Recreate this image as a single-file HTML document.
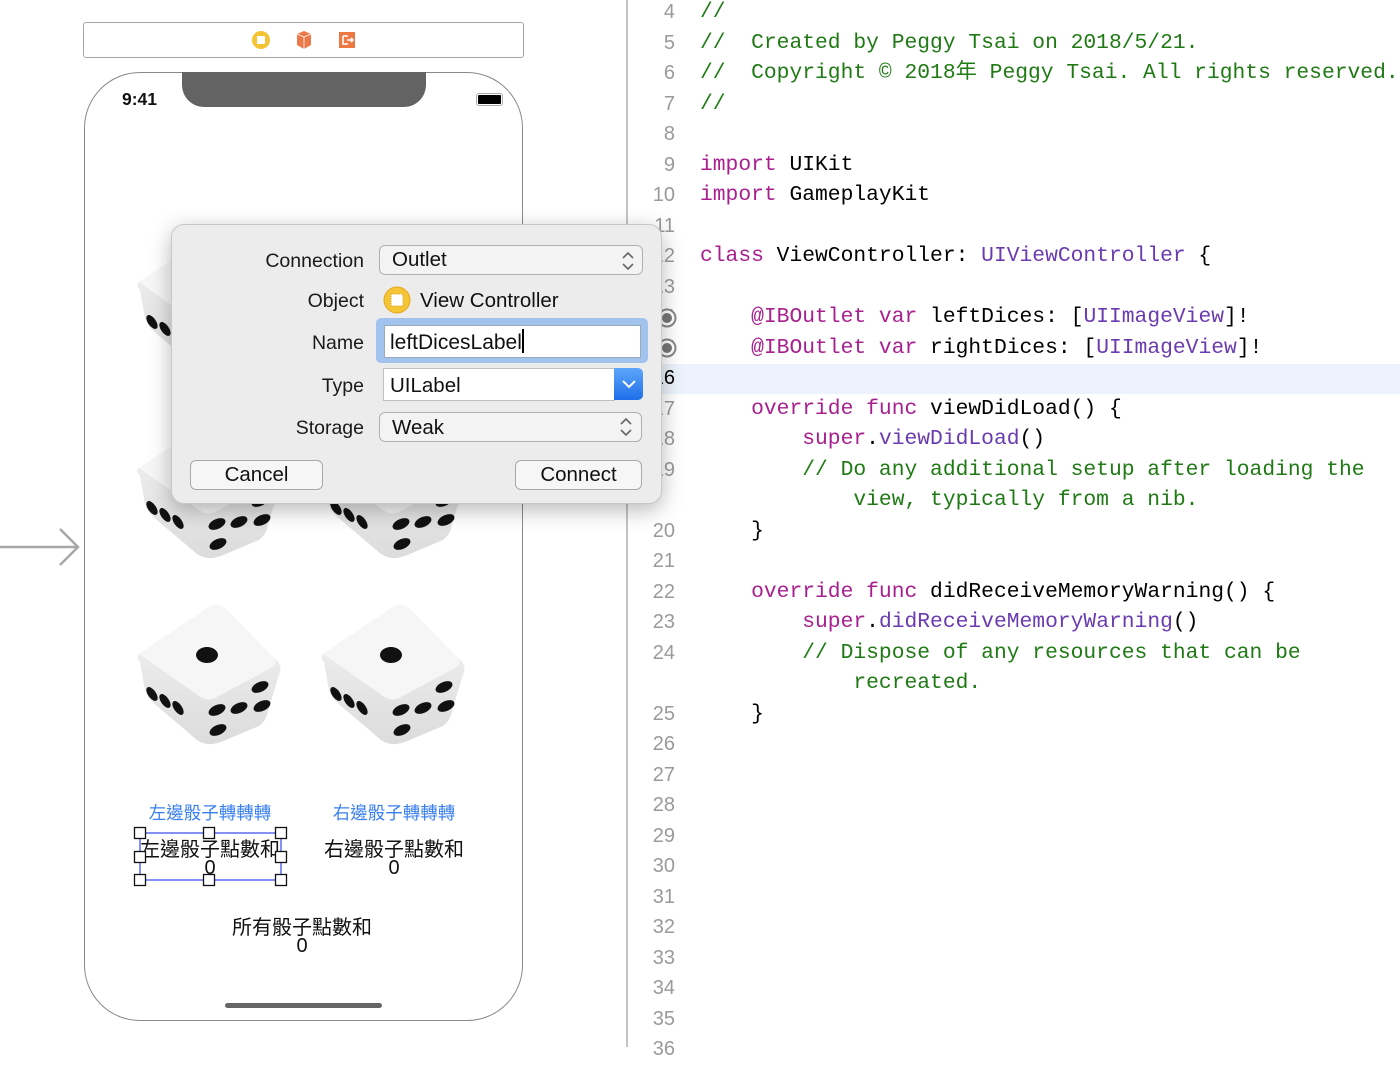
<!DOCTYPE html>
<html><head><meta charset="utf-8">
<style>
*{margin:0;padding:0;box-sizing:border-box}
body{width:1400px;height:1047px;overflow:hidden;background:#fff;position:relative;font-family:"Liberation Sans","Noto Sans CJK TC",sans-serif}
.abs{position:absolute}
#code{position:absolute;left:0;top:-3px;width:1400px}
.row{position:absolute;left:0;height:30.5px;width:1400px;font-family:"Liberation Mono","Noto Sans CJK TC",monospace;font-size:21.3px;line-height:30.5px;white-space:pre;color:#000}
.ln{position:absolute;left:630px;width:45px;text-align:right;font-family:"Liberation Sans",sans-serif;font-size:20px;color:#9a9a9a}
.tx{position:absolute;left:700px}
.c{color:#1f7a14}.k{color:#a8208f}.t{color:#6a3bb0}
.lbl{position:absolute;right:1036px;font-size:19.5px;color:#1a1a1a;text-align:right}
.pop{position:absolute;border:1.5px solid #b0b0b0;border-radius:6px;background:#f3f3f3;font-size:20.5px;color:#111;padding-left:12px}
.btn{position:absolute;border:1.5px solid #a8a8a8;border-radius:6px;background:#f6f6f6;font-size:20.5px;text-align:center;line-height:26px;color:#111}
.cn{position:absolute;font-size:20px;color:#111;text-align:center;width:200px}
</style></head><body>

<div class="abs" style="left:626px;top:0;width:2px;height:1047px;background:#c4c4c4"></div>
<div class="abs" style="left:628px;top:364px;width:772px;height:30px;background:#ecf3fc"></div>

<div id="code">
<div class="row" style="top:0"><span class="ln">4</span><span class="tx c">//</span></div>
<div class="row" style="top:30.5px"><span class="ln">5</span><span class="tx c">//  Created by Peggy Tsai on 2018/5/21.</span></div>
<div class="row" style="top:61px"><span class="ln">6</span><span class="tx c">//  Copyright © 2018年 Peggy Tsai. All rights reserved.</span></div>
<div class="row" style="top:91.5px"><span class="ln">7</span><span class="tx c">//</span></div>
<div class="row" style="top:122px"><span class="ln">8</span></div>
<div class="row" style="top:152.5px"><span class="ln">9</span><span class="tx"><span class="k">import</span> UIKit</span></div>
<div class="row" style="top:183px"><span class="ln">10</span><span class="tx"><span class="k">import</span> GameplayKit</span></div>
<div class="row" style="top:213.5px"><span class="ln">11</span></div>
<div class="row" style="top:244px"><span class="ln">12</span><span class="tx"><span class="k">class</span> ViewController: <span class="t">UIViewController</span> {</span></div>
<div class="row" style="top:274.5px"><span class="ln">13</span></div>
<div class="row" style="top:305px"><span class="ln">14</span><span class="tx">    <span class="k">@IBOutlet var</span> leftDices: [<span class="t">UIImageView</span>]!</span></div>
<div class="row" style="top:335.5px"><span class="ln">15</span><span class="tx">    <span class="k">@IBOutlet var</span> rightDices: [<span class="t">UIImageView</span>]!</span></div>
<div class="row" style="top:366px"><span class="ln" style="color:#000">16</span></div>
<div class="row" style="top:396.5px"><span class="ln">17</span><span class="tx">    <span class="k">override func</span> viewDidLoad() {</span></div>
<div class="row" style="top:427px"><span class="ln">18</span><span class="tx">        <span class="k">super</span>.<span class="t">viewDidLoad</span>()</span></div>
<div class="row" style="top:457.5px"><span class="ln">19</span><span class="tx c">        // Do any additional setup after loading the</span></div>
<div class="row" style="top:488px"><span class="tx c">            view, typically from a nib.</span></div>
<div class="row" style="top:518.5px"><span class="ln">20</span><span class="tx">    }</span></div>
<div class="row" style="top:549px"><span class="ln">21</span></div>
<div class="row" style="top:579.5px"><span class="ln">22</span><span class="tx">    <span class="k">override func</span> didReceiveMemoryWarning() {</span></div>
<div class="row" style="top:610px"><span class="ln">23</span><span class="tx">        <span class="k">super</span>.<span class="t">didReceiveMemoryWarning</span>()</span></div>
<div class="row" style="top:640.5px"><span class="ln">24</span><span class="tx c">        // Dispose of any resources that can be</span></div>
<div class="row" style="top:671px"><span class="tx c">            recreated.</span></div>
<div class="row" style="top:701.5px"><span class="ln">25</span><span class="tx">    }</span></div>
<div class="row" style="top:732px"><span class="ln">26</span></div>
<div class="row" style="top:762.5px"><span class="ln">27</span></div>
<div class="row" style="top:793px"><span class="ln">28</span></div>
<div class="row" style="top:823.5px"><span class="ln">29</span></div>
<div class="row" style="top:854px"><span class="ln">30</span></div>
<div class="row" style="top:884.5px"><span class="ln">31</span></div>
<div class="row" style="top:915px"><span class="ln">32</span></div>
<div class="row" style="top:945.5px"><span class="ln">33</span></div>
<div class="row" style="top:976px"><span class="ln">34</span></div>
<div class="row" style="top:1006.5px"><span class="ln">35</span></div>
<div class="row" style="top:1037px"><span class="ln">36</span></div>
</div>

<svg class="abs" style="left:655px;top:305px" width="24" height="56">
<circle cx="12" cy="13" r="8.5" fill="#fff" stroke="#888" stroke-width="2"/><circle cx="12" cy="13" r="5" fill="#777"/>
<circle cx="12" cy="43" r="8.5" fill="#fff" stroke="#888" stroke-width="2"/><circle cx="12" cy="43" r="5" fill="#777"/>
</svg>

<div class="abs" style="left:83px;top:22px;width:441px;height:36px;border:1.5px solid #a5a5a5;border-radius:3px;background:#fff"></div>
<svg class="abs" style="left:248px;top:28px" width="115" height="24">
<circle cx="13" cy="12" r="9" fill="#f5c434"/><rect x="9" y="8" width="8" height="8" fill="#fff"/>
<path d="M49 6 L56 3 L63 6 L63 17 L56 21 L49 17 Z" fill="#ec7a48"/><path d="M49 6 L56 9 L63 6 M56 9 L56 21" stroke="#fff" stroke-width="0.8" fill="none"/>
<rect x="91" y="4" width="16" height="16" fill="#ee7843"/><path d="M95 8 h5 M95 8 v8 h5 M99 12 h6 M103 10 l2 2 -2 2" stroke="#fff" stroke-width="1.6" fill="none"/>
</svg>

<div class="abs" style="left:84px;top:72px;width:439px;height:949px;border:1.5px solid #8a8a8a;border-radius:56px;background:#fff"></div>
<div class="abs" style="left:182px;top:72px;width:244px;height:35px;background:#636363;border-radius:0 0 22px 22px"></div>
<div class="abs" style="left:122px;top:89px;font-size:17.5px;font-weight:bold;color:#111">9:41</div>
<div class="abs" style="left:476px;top:93px;width:27px;height:13px;border:1px solid #aaa;border-radius:3px;background:#fff;padding:1px"><div style="width:100%;height:100%;background:#000;border-radius:1px"></div></div>
<div class="abs" style="left:225px;top:1003px;width:157px;height:5px;border-radius:3px;background:#666"></div>

<svg class="abs" style="left:0;top:525px" width="85" height="45">
<path d="M0 22 H78 M60 4 L78 22 L60 40" stroke="#a8a8a8" stroke-width="2.5" fill="none"/>
</svg>

<svg class="abs" style="left:0;top:0" width="620" height="800">
<defs>
<linearGradient id="g" x1="0" y1="0" x2="0" y2="1"><stop offset="0" stop-color="#f4f4f4"/><stop offset="1" stop-color="#dcdcdc"/></linearGradient>
<g id="die">
<path d="M4 52 Q0 55 5 60 L10 88 Q12 96 22 104 L62 138 Q72 145 86 140 L124 124 Q132 118 133 108 L145 70 Q147 62 140 57 L92 8 Q84 0 74 5 Z" fill="url(#g)"/>
<path d="M4 52 L74 5 Q84 0 92 8 L140 57 Q143 62 136 66 L80 96 Q72 100 64 94 Z" fill="#f6f6f6"/>
<ellipse cx="72" cy="53" rx="11" ry="8" fill="#111"/>
<ellipse cx="17" cy="92" rx="4" ry="8" transform="rotate(-35 17 92)" fill="#111"/>
<ellipse cx="30" cy="99" rx="4" ry="8" transform="rotate(-35 30 99)" fill="#111"/>
<ellipse cx="43" cy="106" rx="4" ry="8" transform="rotate(-35 43 106)" fill="#111"/>
<ellipse cx="125" cy="85" rx="9" ry="5" transform="rotate(-25 125 85)" fill="#111"/>
<ellipse cx="82" cy="108" rx="9" ry="5" transform="rotate(-25 82 108)" fill="#111"/>
<ellipse cx="104" cy="106" rx="9" ry="5" transform="rotate(-25 104 106)" fill="#111"/>
<ellipse cx="127" cy="104" rx="9" ry="5" transform="rotate(-25 127 104)" fill="#111"/>
<ellipse cx="83" cy="128" rx="9" ry="5" transform="rotate(-25 83 128)" fill="#111"/>
</g>
</defs>
<use href="#die" x="135" y="230"/><use href="#die" x="319" y="230"/>
<use href="#die" x="135" y="416"/><use href="#die" x="319" y="416"/>
<use href="#die" x="135" y="602"/><use href="#die" x="319" y="602"/>
</svg>

<div class="cn" style="left:110px;top:800px;font-size:17.5px;color:#3a7ff0">左邊骰子轉轉轉</div>
<div class="cn" style="left:294px;top:800px;font-size:17.5px;color:#3a7ff0">右邊骰子轉轉轉</div>
<div class="cn" style="left:110px;top:833px">左邊骰子點數和</div>
<div class="cn" style="left:110px;top:857px">0</div>
<div class="cn" style="left:294px;top:833px">右邊骰子點數和</div>
<div class="cn" style="left:294px;top:857px">0</div>
<div class="cn" style="left:202px;top:911px">所有骰子點數和</div>
<div class="cn" style="left:202px;top:935px">0</div>
<svg class="abs" style="left:130px;top:824px" width="165" height="66">
<rect x="10" y="9" width="141" height="47" fill="none" stroke="#5b6cf0" stroke-width="1.5"/>
<g fill="#fff" stroke="#111" stroke-width="1.3">
<rect x="4.5" y="3.5" width="11" height="11"/><rect x="73.5" y="3.5" width="11" height="11"/><rect x="145.5" y="3.5" width="11" height="11"/>
<rect x="4.5" y="27.5" width="11" height="11"/><rect x="145.5" y="27.5" width="11" height="11"/>
<rect x="4.5" y="50.5" width="11" height="11"/><rect x="73.5" y="50.5" width="11" height="11"/><rect x="145.5" y="50.5" width="11" height="11"/>
</g></svg>

<div class="abs" style="left:171px;top:224px;width:491px;height:280px;background:#ececec;border:1px solid #c8c8c8;border-radius:13px;box-shadow:0 6px 22px rgba(0,0,0,0.28)"></div>
<div class="lbl" style="top:250px">Connection</div>
<div class="lbl" style="top:290px">Object</div>
<div class="lbl" style="top:332px">Name</div>
<div class="lbl" style="top:375px">Type</div>
<div class="lbl" style="top:417px">Storage</div>
<div class="pop" style="left:379px;top:245px;width:264px;height:30px;line-height:28px">Outlet</div>
<svg class="abs" style="left:620px;top:250px" width="16" height="22"><path d="M3 8 L8 3 L13 8 M3 14 L8 19 L13 14" stroke="#666" stroke-width="1.6" fill="none"/></svg>
<svg class="abs" style="left:383px;top:286px" width="28" height="28"><circle cx="14" cy="14" r="13" fill="#f5c536" stroke="#e0a820"/><rect x="8" y="8" width="12" height="12" fill="#fff" stroke="#e0a820" stroke-dasharray="1.5 1"/></svg>
<div class="abs" style="left:420px;top:289px;font-size:20.5px;color:#111">View Controller</div>
<div class="abs" style="left:376px;top:318px;width:272px;height:45px;background:#a2c3ee;border-radius:5px"></div>
<div class="abs" style="left:384px;top:325px;width:257px;height:33px;background:#fff;border:1px solid #9ab;font-size:21px;line-height:33px;padding-left:5px;color:#111">leftDicesLabel<span style="display:inline-block;width:2px;height:24px;background:#000;vertical-align:-4px"></span></div>
<div class="abs" style="left:383px;top:368px;width:232px;height:33px;background:#fff;border:1px solid #c0c0c0;font-size:20.5px;line-height:33px;padding-left:6px;color:#111">UILabel</div>
<div class="abs" style="left:614px;top:368px;width:29px;height:32px;background:linear-gradient(#5ea6fa,#1e6eea);border-radius:0 5px 5px 0"></div>
<svg class="abs" style="left:620px;top:376px" width="18" height="16"><path d="M3 5 L9 11 L15 5" stroke="#fff" stroke-width="2" fill="none"/></svg>
<div class="pop" style="left:379px;top:412px;width:263px;height:30px;line-height:29px">Weak</div>
<svg class="abs" style="left:618px;top:416px" width="16" height="22"><path d="M3 8 L8 3 L13 8 M3 14 L8 19 L13 14" stroke="#666" stroke-width="1.6" fill="none"/></svg>
<div class="btn" style="left:190px;top:460px;width:133px;height:30px;line-height:28px">Cancel</div>
<div class="btn" style="left:515px;top:460px;width:127px;height:30px;line-height:28px">Connect</div>
</body></html>
